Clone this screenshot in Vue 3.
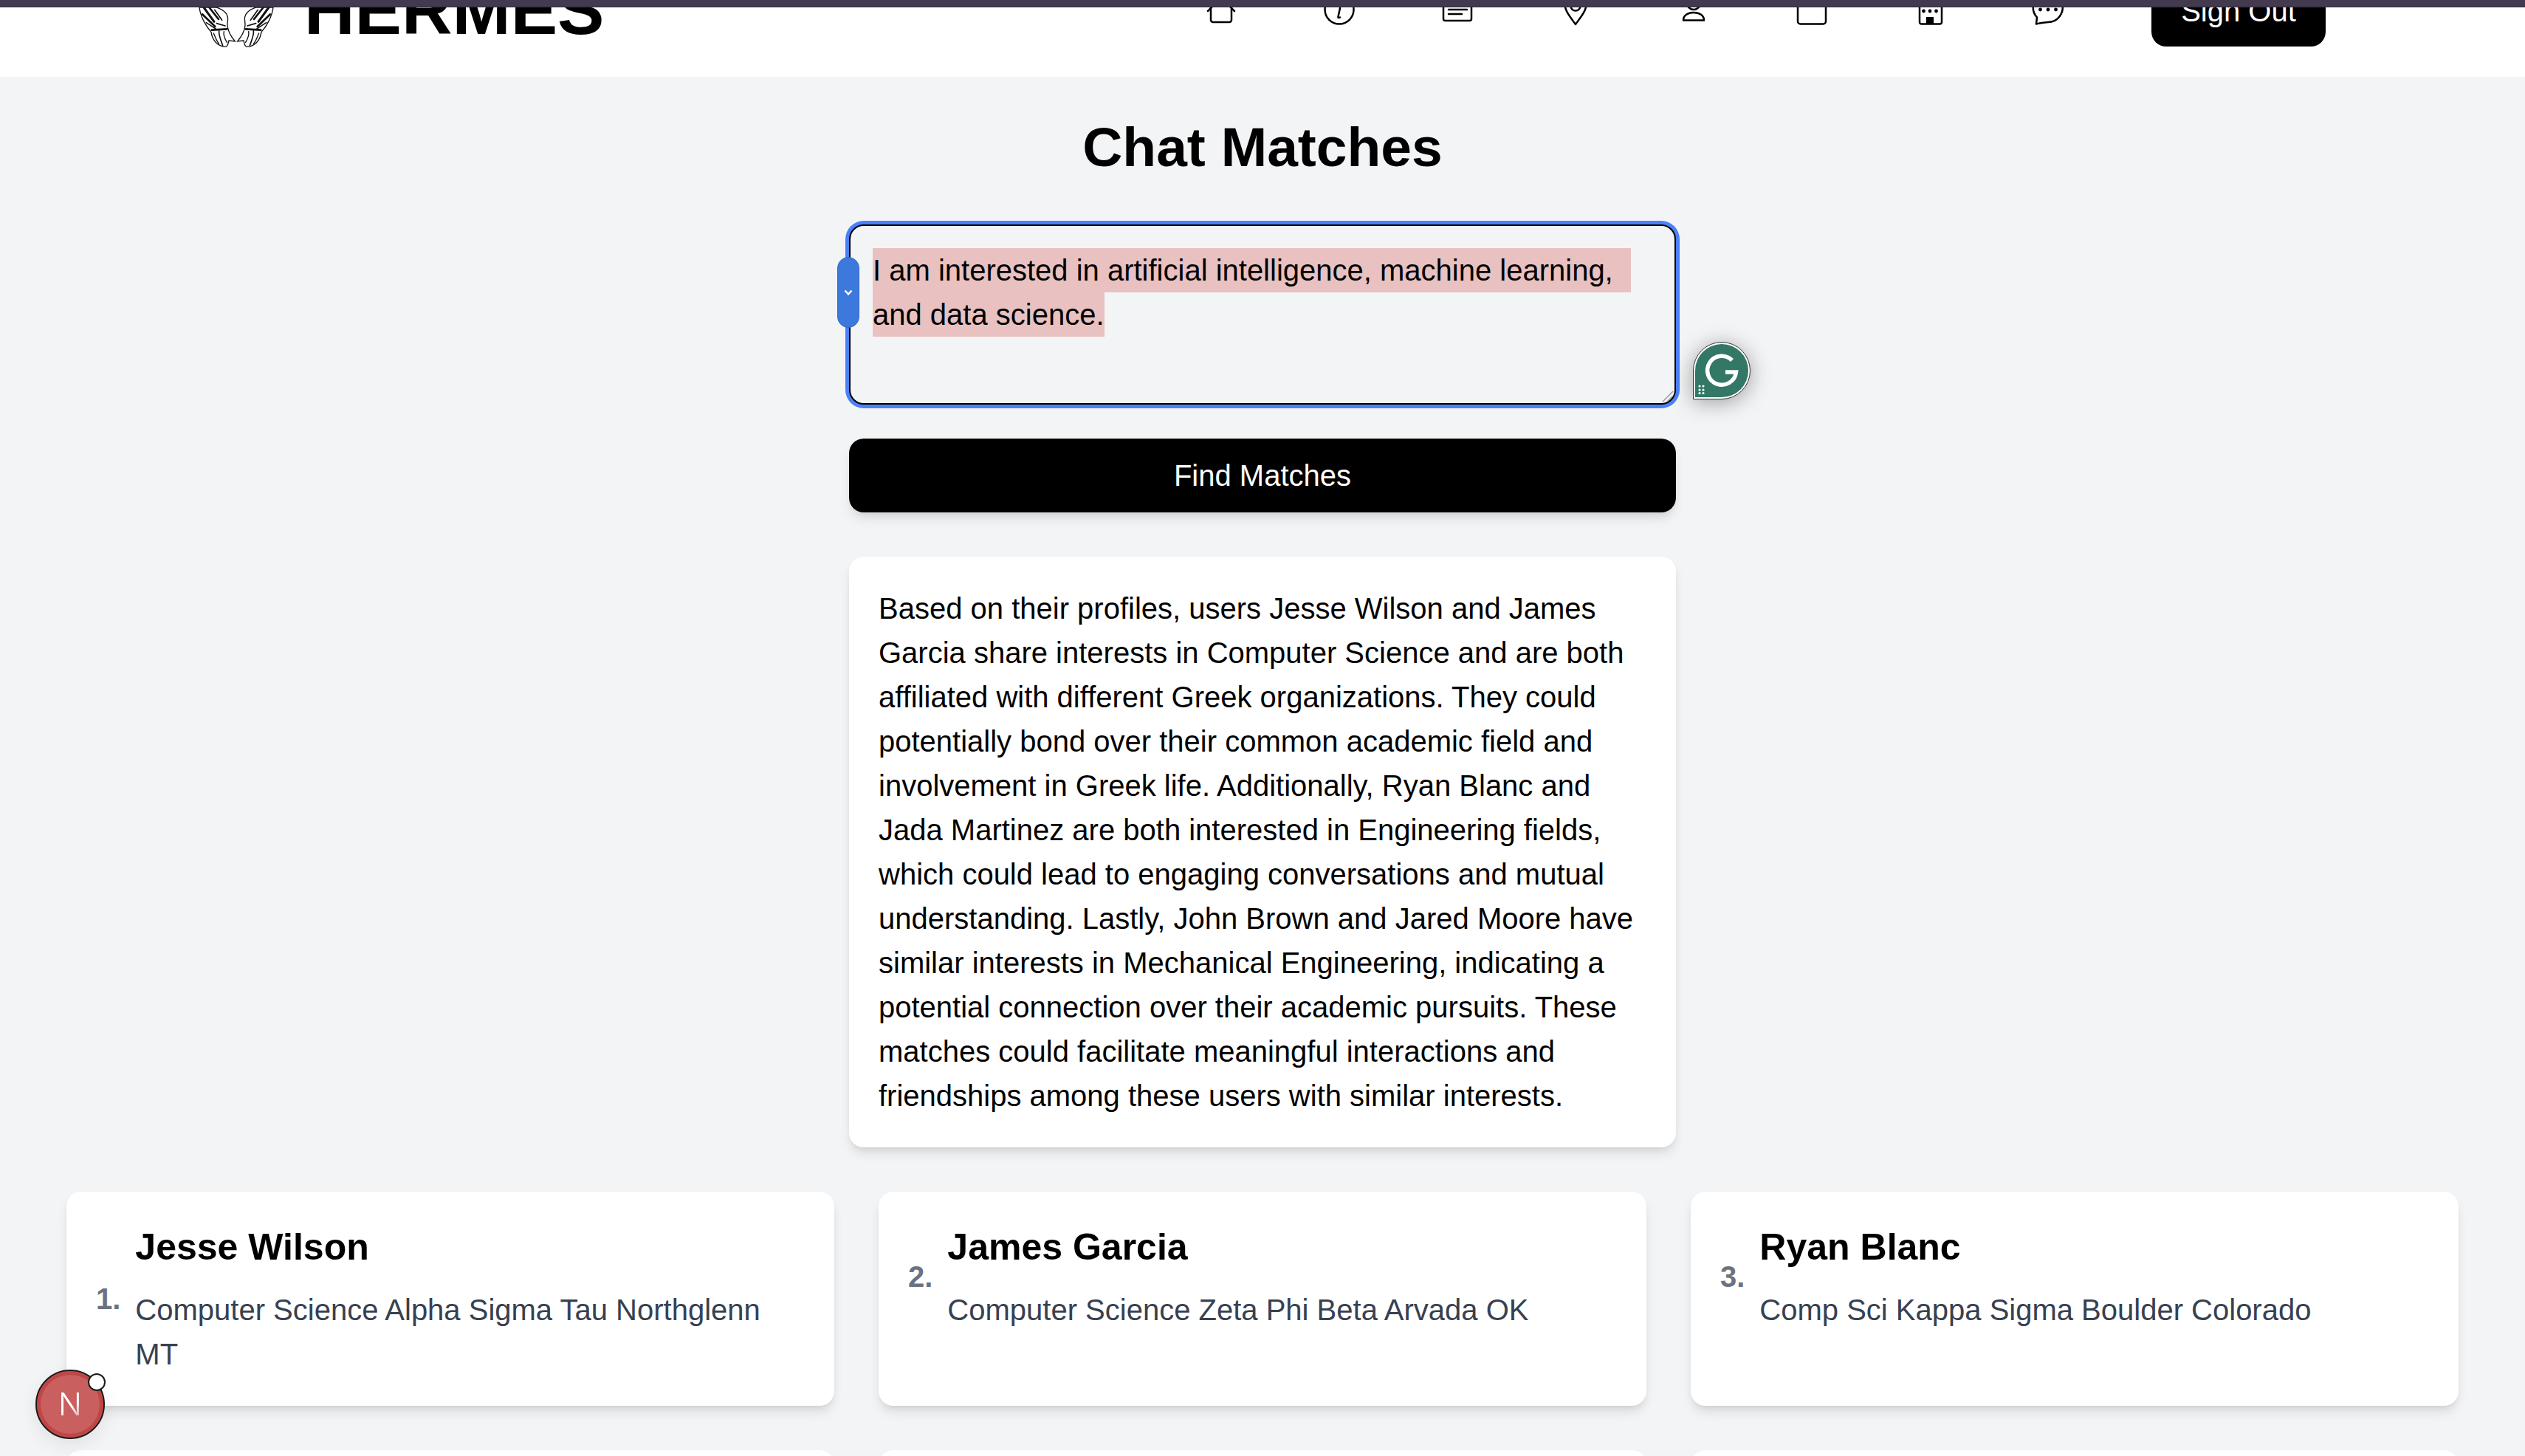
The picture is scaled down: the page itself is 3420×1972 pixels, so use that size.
<script setup>
const summary = 'Based on their profiles, users Jesse Wilson and James Garcia share interests in Computer Science and are both affiliated with different Greek organizations. They could potentially bond over their common academic field and involvement in Greek life. Additionally, Ryan Blanc and Jada Martinez are both interested in Engineering fields, which could lead to engaging conversations and mutual understanding. Lastly, John Brown and Jared Moore have similar interests in Mechanical Engineering, indicating a potential connection over their academic pursuits. These matches could facilitate meaningful interactions and friendships among these users with similar interests.'
const matches = [
  { name: 'Jesse Wilson', info: 'Computer Science Alpha Sigma Tau Northglenn MT' },
  { name: 'James Garcia', info: 'Computer Science Zeta Phi Beta Arvada OK' },
  { name: 'Ryan Blanc', info: 'Comp Sci Kappa Sigma Boulder Colorado' },
  { name: '', info: '' },
  { name: '', info: '' },
  { name: '', info: '' }
]
const wing = 'M60 30C65 70 88 108 108 130C113 165 135 188 165 190C178 190 176 175 180 165L205 168C190 150 178 130 175 110C170 90 185 70 165 50C155 40 145 35 130 30Z'
const feathers = [
  ['M78 30L120 88', 9],
  ['M100 30L138 78', 8],
  ['M72 58L124 108', 8],
  ['M122 40L152 82', 5],
  ['M88 92L128 118', 5],
  ['M110 122L172 118', 8],
  ['M118 135C125 150 128 165 140 178', 4],
  ['M140 125C138 145 148 165 155 185', 5],
  ['M160 128C156 145 165 160 172 172', 4],
  ['M130 95L165 105', 5]
]
</script>

<template>
  <div class="page">
    <div class="topbar"></div>
    <header class="header">
      <div class="logo">
        <svg class="wings" viewBox="0 0 420 210" width="140" height="70" aria-label="Hermes logo">
          <g>
            <path :d="wing" fill="#fff" stroke="#111" stroke-width="4"/>
            <path v-for="(f, i) in feathers" :key="i" :d="f[0]" :stroke-width="f[1]" fill="none" stroke="#111" stroke-linecap="round"/>
          </g>
          <g transform="translate(420 0) scale(-1 1)">
            <path :d="wing" fill="#fff" stroke="#111" stroke-width="4"/>
            <path v-for="(f, i) in feathers" :key="i" :d="f[0]" :stroke-width="f[1]" fill="none" stroke="#111" stroke-linecap="round"/>
          </g>
        </svg>
        <span class="brand">HERMES</span>
      </div>

      <nav class="nav">
        <svg class="icon" viewBox="0 0 60 60"><path d="M12 37L30 19L48 37"/><path d="M16 31V49a3 3 0 0 0 3 3H41a3 3 0 0 0 3-3V31"/></svg>
        <svg class="icon" viewBox="0 0 60 60"><circle cx="30" cy="35" r="19.500"/><path d="M31 33L28.500 44.500q-.5 2.500 2.500 1"/></svg>
        <svg class="icon" viewBox="0 0 60 60"><rect x="11" y="18" width="38" height="32" rx="2.500"/><path d="M18 35H43M18 41H36"/></svg>
        <svg class="icon" viewBox="0 0 60 60"><path d="M30 55C22 44 15.500 36 15.500 28A14.500 14.500 0 0 1 44.500 28C44.500 36 38 44 30 55Z"/><circle cx="30" cy="30" r="6.500"/></svg>
        <svg class="icon" viewBox="0 0 60 60"><circle cx="30" cy="26" r="9"/><path d="M16 49.500C16 43 22 39 30 39C38 39 44 43 44 49.500Z"/></svg>
        <svg class="icon" viewBox="0 0 60 60"><rect x="11" y="15" width="38" height="39.500" rx="3.500"/></svg>
        <svg class="icon" viewBox="0 0 60 60"><path d="M16 15V52a2.500 2.500 0 0 0 2.500 2.500H43.500a2.500 2.500 0 0 0 2.500-2.500V15"/><path class="solid" d="M25 45H35V55H25Z"/><circle class="solid" cx="21.500" cy="37" r="2.400"/><circle class="solid" cx="30" cy="37" r="2.400"/><circle class="solid" cx="38.500" cy="37" r="2.400"/></svg>
        <svg class="icon" viewBox="0 0 60 60"><path d="M14 54.500L15 45.500A20 20 0 1 1 30 52C26 52.500 20 53 14 54.500Z"/><circle class="solid" cx="19.500" cy="35" r="2.400"/><circle class="solid" cx="30" cy="35" r="2.400"/><circle class="solid" cx="40.500" cy="35" r="2.400"/></svg>
      </nav>

      <button class="signout">Sign Out</button>
    </header>

    <main class="main">
      <h1 class="title">Chat Matches</h1>

      <div class="column">
        <div class="field-wrap">
          <div class="field" role="textbox">
            <span class="hl hl-first">I am interested in artificial intelligence, machine learning,</span>
            <span class="hl">and data science.</span>
          </div>
          <svg class="resize" viewBox="0 0 16 16" width="16" height="16"><path d="M1 15L15 1M7 15L15 7" stroke="#9a9a9a" stroke-width="1.500" fill="none"/></svg>
          <div class="pill">
            <svg viewBox="0 0 12 9" width="12" height="9"><path d="M1.500 1.500L6 6.500L10.500 1.500" fill="none" stroke="#fff" stroke-width="2.500"/></svg>
          </div>
          <svg class="grammarly" viewBox="0 0 78 78" width="78" height="78">
            <path d="M.5 77.500V39A38.500 38.500 0 1 1 39 77.500Z" fill="#fff" stroke="#333" stroke-width="1"/>
            <path d="M3 75V39A36 36 0 1 1 39 75Z" fill="#337766"/>
            <path d="M53 25A19.500 19.500 0 1 0 58.500 41H44" fill="none" stroke="#fff" stroke-width="5.500"/>
            <g fill="#fff">
              <circle cx="9" cy="60" r="1.600"/><circle cx="14" cy="60" r="1.600"/>
              <circle cx="9" cy="65" r="1.600"/><circle cx="14" cy="65" r="1.600"/>
              <circle cx="9" cy="69.500" r="1.600"/><circle cx="14" cy="69.500" r="1.600"/>
            </g>
          </svg>
        </div>

        <button class="find">Find Matches</button>

        <section class="summary">{{ summary }}</section>
      </div>

      <ol class="grid">
        <li v-for="(m, i) in matches" :key="i" class="card">
          <div v-if="m.name" class="card-row">
            <span class="num">{{ i + 1 }}.</span>
            <div class="card-body">
              <h2 class="name">{{ m.name }}</h2>
              <p class="info">{{ m.info }}</p>
            </div>
          </div>
        </li>
      </ol>
    </main>

    <div class="next-badge">
      <span class="next-n">N</span>
      <span class="next-dot"></span>
    </div>
  </div>
</template>

<style>
html, body { margin: 0; background: #f3f4f6; overflow: hidden; height: 1972px; }
</style>

<style scoped>
.page {
  width: 3420px;
  height: 1972px;
  overflow: hidden;
  position: relative;
  background: #f3f4f6;
  font-family: "Liberation Sans", Arial, sans-serif;
  font-size: 40px;
  line-height: 60px;
  color: #000;
}
.topbar {
  height: 10px;
  background: linear-gradient(#443a50 0 8px, #3d3447 8px);
}
.header {
  height: 94px;
  box-sizing: border-box;
  background: #fff;
  overflow: hidden;
  display: flex;
  align-items: flex-end;
  padding: 0 270px 34px 250px;
}
.logo { display: flex; align-items: flex-end; gap: 22px; }
.wings { display: block; flex: none; }
.brand {
  font-size: 95px;
  font-weight: 700;
  line-height: 1;
  margin-bottom: 9px;
  white-space: nowrap;
}
.nav {
  margin-left: auto;
  display: flex;
  gap: 100px;
  margin-bottom: 32px;
}
.icon {
  width: 60px;
  height: 60px;
  display: block;
  fill: none;
  stroke: #000;
  stroke-width: 2.500;
  stroke-linecap: round;
  stroke-linejoin: round;
}
.icon .solid { fill: #000; stroke: none; }
.signout {
  margin: 0 0 7px 110px;
  width: 236px;
  height: 100px;
  border: 0;
  border-radius: 20px;
  background: #000;
  color: #fff;
  font: inherit;
  padding: 4px 0 0;
}
.main { padding: 50px 90px 0; }
.title {
  margin: 0 0 60px;
  font-size: 75px;
  line-height: 90px;
  font-weight: 700;
  text-align: center;
}
.column { width: 1120px; margin: 0 auto; }
.field-wrap { position: relative; }
.field {
  box-sizing: border-box;
  height: 244px;
  border: 2.500px solid #000;
  border-radius: 20px;
  box-shadow: 0 0 0 5px #4a80fb;
  padding: 30px;
  background: #f3f4f6;
}
.hl {
  display: block;
  width: fit-content;
  background: #e8c1c0;
  white-space: pre;
}
.hl-first { padding-right: 24px; }
.resize { position: absolute; right: 3px; bottom: 3px; }
.pill {
  position: absolute;
  left: -16px;
  top: 44px;
  width: 30px;
  height: 96px;
  box-sizing: border-box;
  border: 1px solid #3568c4;
  border-radius: 15px;
  background: #3d78dd;
  display: flex;
  align-items: center;
  justify-content: center;
}
.pill svg { display: block; }
.grammarly {
  position: absolute;
  left: 1143px;
  top: 159px;
  display: block;
  filter: drop-shadow(0 4px 14px rgba(0, 0, 0, .35));
}
.find {
  display: block;
  width: 100%;
  height: 100px;
  margin-top: 46px;
  border: 0;
  border-radius: 20px;
  background: #000;
  color: #fff;
  font: inherit;
  padding: 0;
  box-shadow: 0 10px 15px -2.500px rgba(0, 0, 0, .1), 0 5px 10px -5px rgba(0, 0, 0, .1);
}
.summary {
  margin-top: 60px;
  padding: 40px;
  background: #fff;
  border-radius: 20px;
  box-shadow: 0 10px 15px -2.500px rgba(0, 0, 0, .1), 0 5px 10px -5px rgba(0, 0, 0, .1);
}
.grid {
  list-style: none;
  margin: 60px 0 0;
  padding: 0;
  display: grid;
  grid-template-columns: repeat(3, 1fr);
  gap: 60px;
}
.card {
  box-sizing: border-box;
  min-height: 290px;
  padding: 40px;
  background: #fff;
  border-radius: 20px;
  box-shadow: 0 10px 15px -2.500px rgba(0, 0, 0, .1), 0 5px 10px -5px rgba(0, 0, 0, .1);
}
.card-row { display: flex; align-items: center; gap: 20px; }
.num { font-weight: 700; color: #6b7280; flex: none; }
.card-body { flex: 1; min-width: 0; }
.name { margin: 0 0 20px; font-size: 50px; line-height: 70px; font-weight: 700; }
.info { margin: 0; color: #374151; }
.next-badge {
  position: absolute;
  left: 48px;
  top: 1855px;
  width: 94px;
  height: 94px;
  box-sizing: border-box;
  border-radius: 50%;
  border: 2.500px solid #1a1a1a;
  background: #c95f5f;
  box-shadow: inset 0 0 0 5px #c04646, 0 8px 24px rgba(0, 0, 0, .08);
  display: flex;
  align-items: center;
  justify-content: center;
}
.next-n {
  color: #fff;
  font-size: 42px;
  line-height: 1;
  font-family: Inter, "Liberation Sans", sans-serif;
  font-weight: 300;
  -webkit-mask-image: linear-gradient(150deg, #000 55%, rgba(0, 0, 0, .3));
  mask-image: linear-gradient(150deg, #000 55%, rgba(0, 0, 0, .3));
}
.next-dot {
  position: absolute;
  right: -2.500px;
  top: 3px;
  width: 24px;
  height: 24px;
  box-sizing: border-box;
  border-radius: 50%;
  border: 2.500px solid #1a1a1a;
  background: #fff;
}
</style>
